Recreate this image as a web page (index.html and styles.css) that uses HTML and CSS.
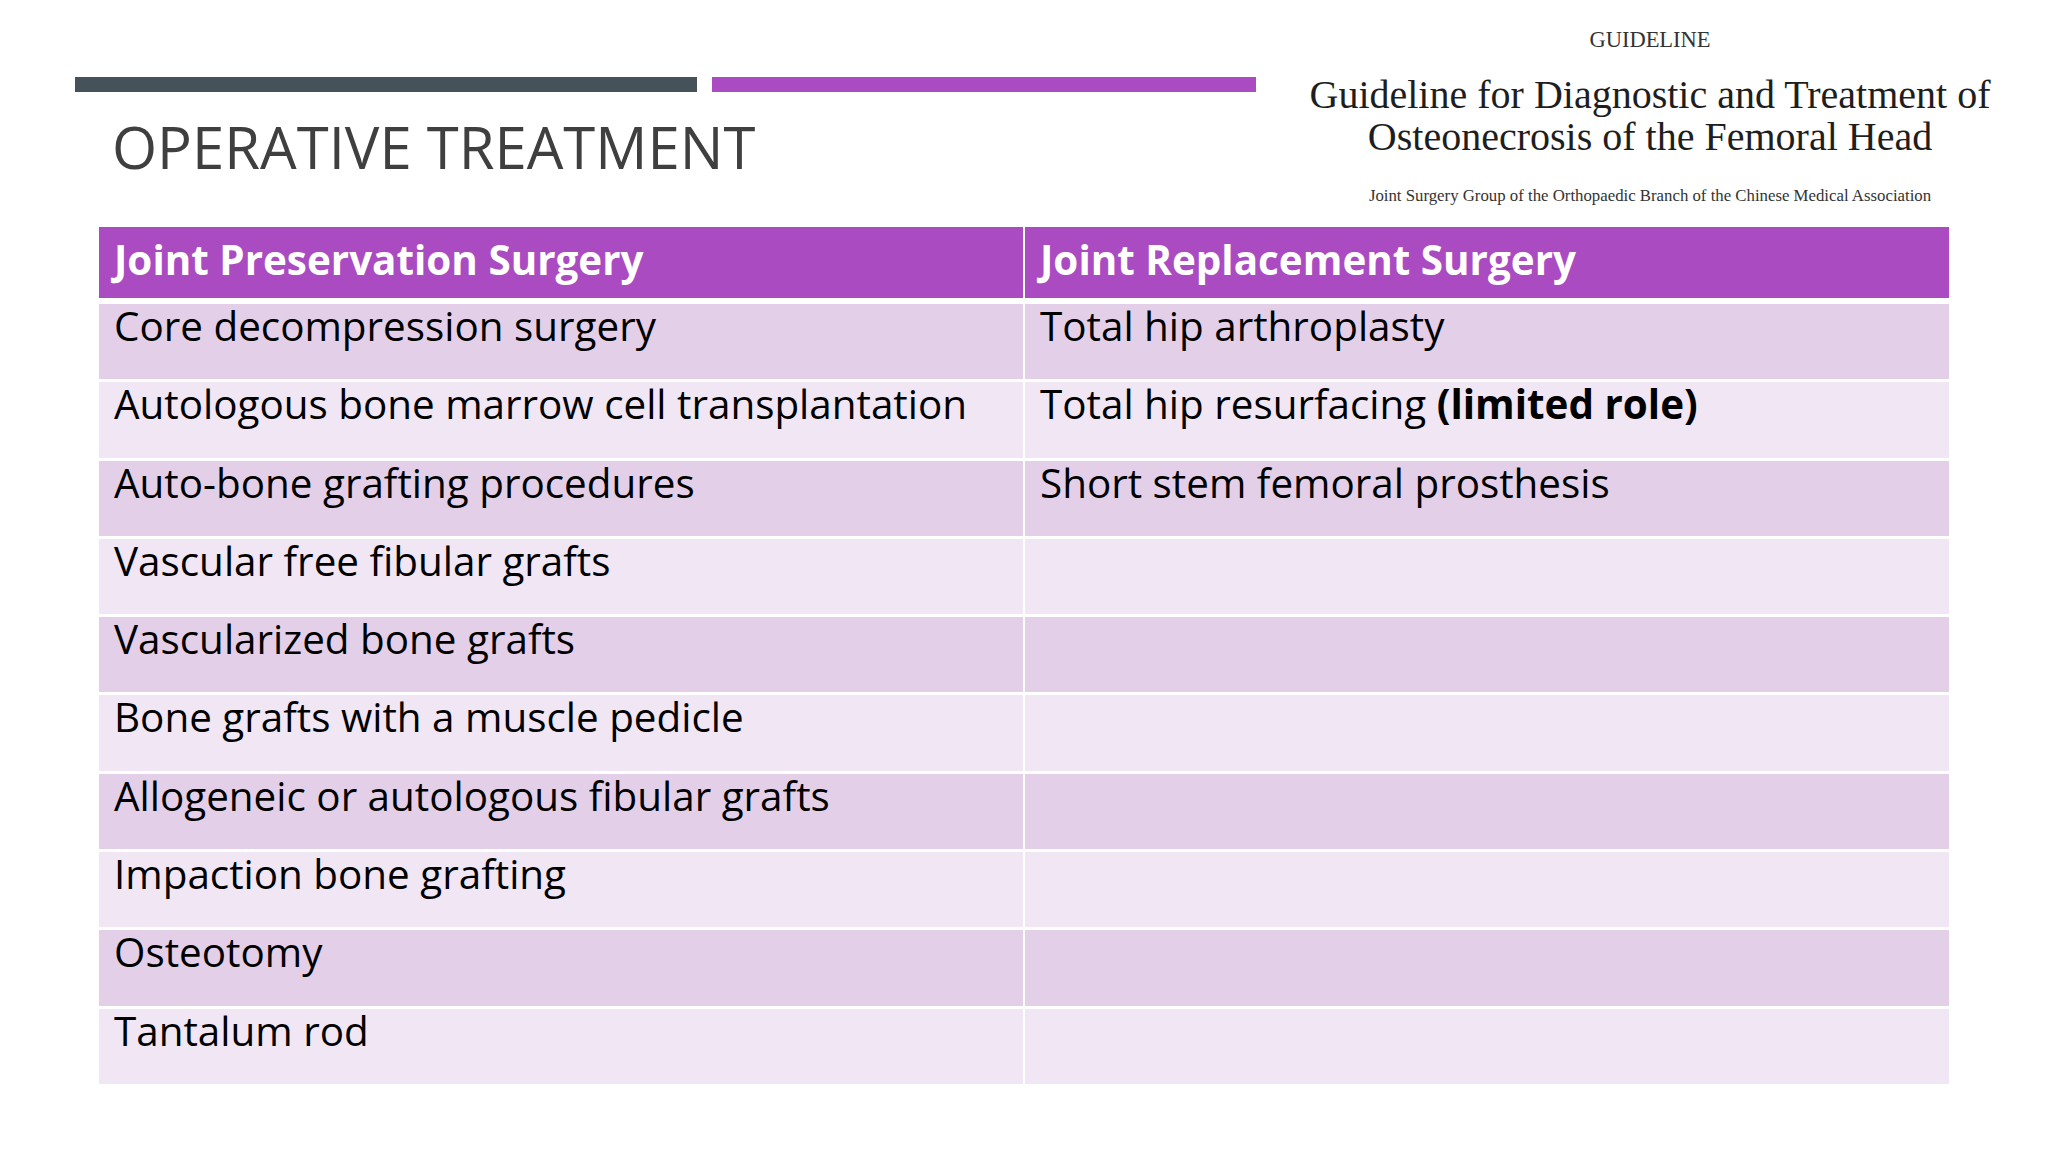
FILE: index.html
```html
<!DOCTYPE html>
<html lang="en">
<head>
<meta charset="utf-8">
<title>Operative Treatment</title>
<link rel="stylesheet" href="styles.css">
</head>
<body>
<div class="slide">
  <header class="top">
    <div class="left">
      <div class="bars"><span class="bar bar-dark"></span><span class="bar bar-purple"></span></div>
      <h1 class="title">OPERATIVE TREATMENT</h1>
    </div>
    <div class="guide">
      <div class="guide-kicker">GUIDELINE</div>
      <div class="guide-title">Guideline for Diagnostic and Treatment of<br>Osteonecrosis of the Femoral Head</div>
      <div class="guide-author">Joint Surgery Group of the Orthopaedic Branch of the Chinese Medical Association</div>
    </div>
  </header>
  <div class="table">
    <div class="cell head">Joint Preservation Surgery</div>
    <div class="cell head">Joint Replacement Surgery</div>

    <div class="cell dark">Core decompression surgery</div>
    <div class="cell dark">Total hip arthroplasty</div>

    <div class="cell light">Autologous bone marrow cell transplantation</div>
    <div class="cell light">Total hip resurfacing <b>(limited role)</b></div>

    <div class="cell dark">Auto-bone grafting procedures</div>
    <div class="cell dark">Short stem femoral prosthesis</div>

    <div class="cell light">Vascular free fibular grafts</div>
    <div class="cell light"></div>

    <div class="cell dark">Vascularized bone grafts</div>
    <div class="cell dark"></div>

    <div class="cell light">Bone grafts with a muscle pedicle</div>
    <div class="cell light"></div>

    <div class="cell dark">Allogeneic or autologous fibular grafts</div>
    <div class="cell dark"></div>

    <div class="cell light">Impaction bone grafting</div>
    <div class="cell light"></div>

    <div class="cell dark">Osteotomy</div>
    <div class="cell dark"></div>

    <div class="cell light">Tantalum rod</div>
    <div class="cell light"></div>
  </div>
</div>
</body>
</html>
```
FILE: styles.css
```css
* { box-sizing: border-box; }
html, body { margin: 0; padding: 0; background: #ffffff; }
.slide {
  width: 2048px;
  height: 1152px;
  overflow: hidden;
  font-family: "Open Sans", "Noto Sans", sans-serif;
}
.top {
  display: flex;
  height: 227px;
  padding-left: 75px;
}
.left {
  width: 1181px;
  padding-top: 77px;
}
.bars {
  display: flex;
  gap: 15px;
}
.bar { display: block; height: 15px; }
.bar-dark { width: 622px; background: #45525a; }
.bar-purple { width: 544px; background: #ab4bc1; }
.title {
  margin: 0;
  padding-left: 37px;
  padding-top: 20px;
  font-weight: 400;
  font-size: 58px;
  line-height: 70px;
  color: #3f3f3f;
  white-space: nowrap;
}
.guide {
  margin-left: 34px;
  width: 720px;
  text-align: center;
  font-family: "Liberation Serif", "DejaVu Serif", serif;
  padding-top: 26px;
}
.guide-kicker {
  font-size: 22.5px;
  line-height: 28px;
  color: #333333;
}
.guide-title {
  margin-top: 20px;
  font-size: 40px;
  line-height: 42px;
  color: #1e1e1e;
}
.guide-author {
  margin-top: 27px;
  font-size: 16.8px;
  line-height: 22px;
  color: #333333;
}
.table {
  margin-left: 99px;
  width: 1850px;
  display: grid;
  grid-template-columns: 924px 924px;
  grid-template-rows: 74px;
  grid-auto-rows: 75.3px;
  column-gap: 2px;
  row-gap: 3px;
}
.cell {
  padding-left: 15px;
  padding-top: 3px;
  font-size: 40.4px;
  color: #000000;
  white-space: nowrap;
  line-height: 37px;
}
.head {
  background: #ab4bc1;
  color: #ffffff;
  font-weight: 700;
  padding-top: 0;
  line-height: 65px;
  margin-bottom: 3px;
}
.dark { background: #e3d0e8; }
.light { background: #f1e6f4; }
.cell b { font-weight: 700; }
```
